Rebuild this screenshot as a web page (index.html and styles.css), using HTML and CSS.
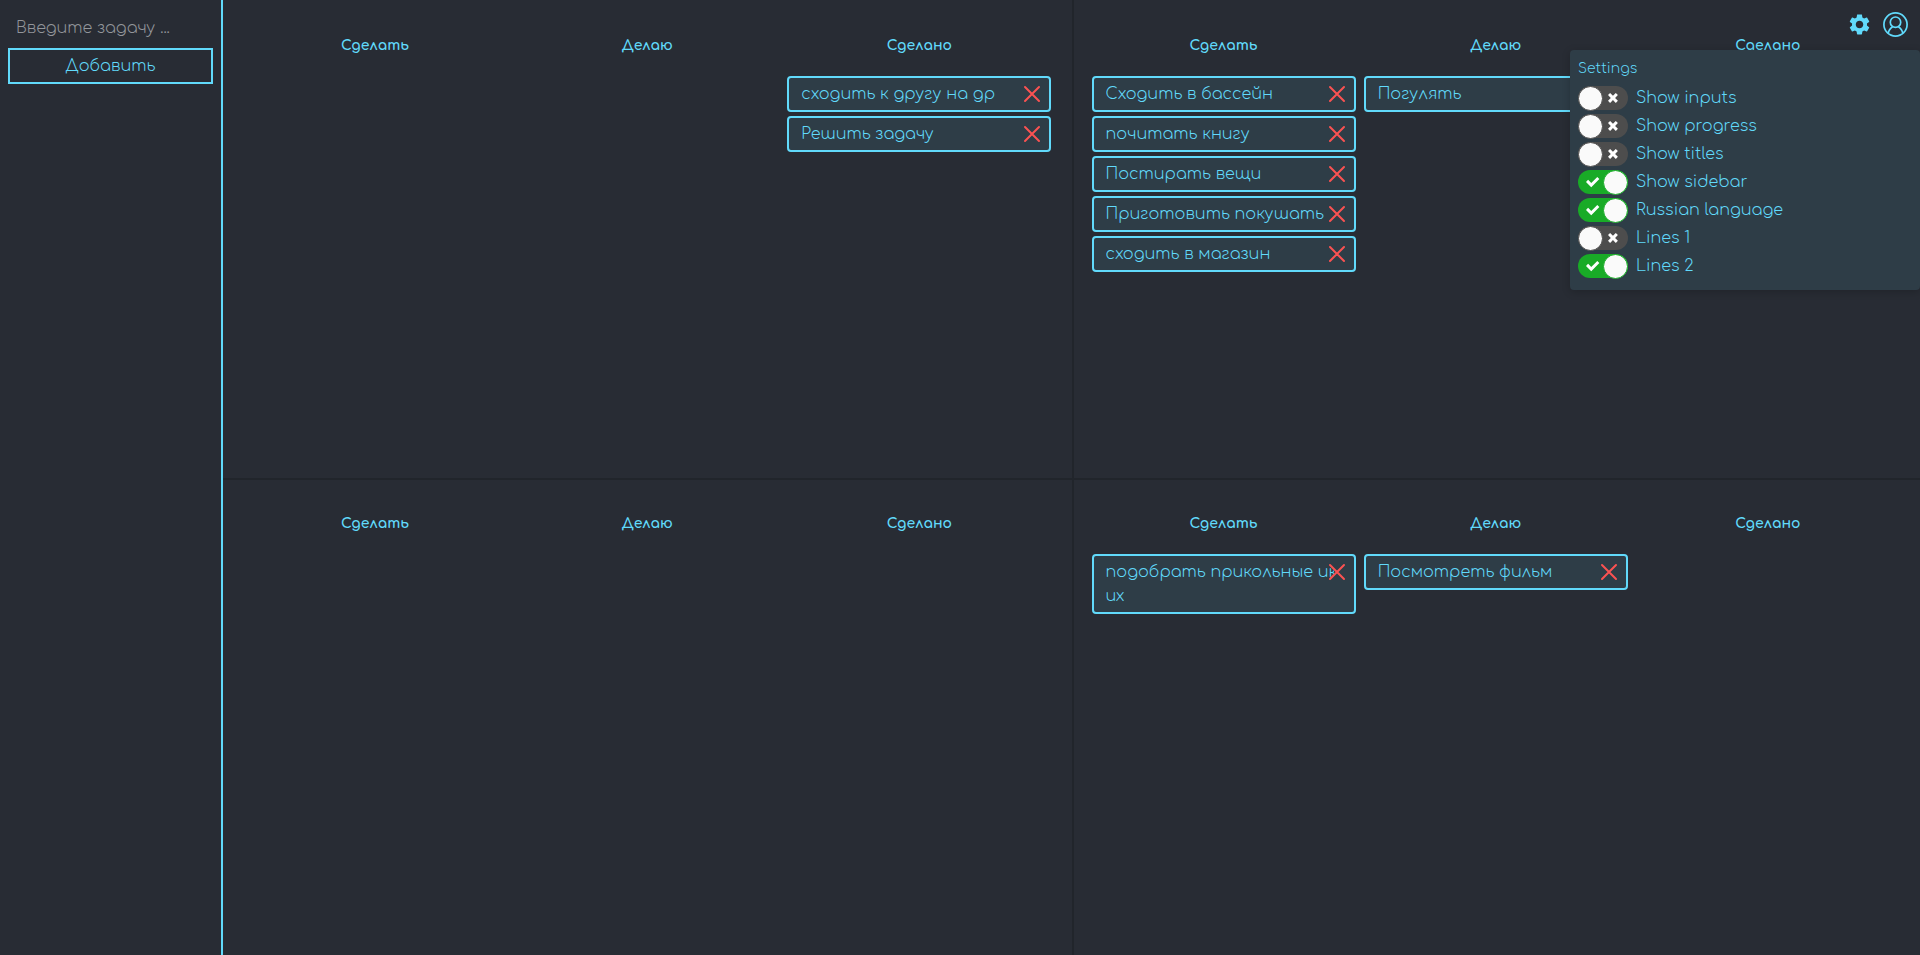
FILE: index.html
```html
<!DOCTYPE html>
<html lang="ru">
<head>
  <meta charset="UTF-8" />
  <meta name="viewport" content="width=device-width, initial-scale=1.0"/>
  <title>Todo Matrix</title>
  <link rel="stylesheet" href="styles.css">
</head>
<body>

  <svg class="sprite" aria-hidden="true">
    <symbol id="cross" viewBox="0 0 18 18">
      <path d="M2 2 L16 16 M16 2 L2 16" fill="none" stroke="currentColor" stroke-width="2" stroke-linecap="round"/>
    </symbol>
    <symbol id="check" viewBox="0 0 14 11">
      <path d="M11.264 0L5.26 6.004 2.103 2.847 0 4.95l5.26 5.26 8.108-8.107L11.264 0" fill="#fff"/>
    </symbol>
    <symbol id="off" viewBox="0 0 10 10">
      <path d="M9.9 2.12L7.78 0 4.95 2.828 2.12 0 0 2.12l2.83 2.83L0 7.776 2.123 9.9 4.95 7.07 7.78 9.9 9.9 7.776 7.072 4.95 9.9 2.12" fill="#fff"/>
    </symbol>
  </svg>

  <aside class="sidebar">
    <input class="task-input" type="text" aria-label="Новая задача" placeholder="Введите задачу ...">
    <button class="add-btn">Добавить</button>
  </aside>

  <main class="matrix">
    <section class="quadrant">
      <div class="column">
        <h4 class="title">Сделать</h4>
      </div>
      <div class="column">
        <h4 class="title">Делаю</h4>
      </div>
      <div class="column">
        <h4 class="title">Сделано</h4>
        <div class="task"><span class="text">сходить к другу на др</span><button class="delete" aria-label="Удалить"><svg><use href="#cross"/></svg></button></div>
        <div class="task"><span class="text">Решить задачу</span><button class="delete" aria-label="Удалить"><svg><use href="#cross"/></svg></button></div>
      </div>
    </section>

    <section class="quadrant">
      <div class="column">
        <h4 class="title">Сделать</h4>
        <div class="task"><span class="text">Сходить в бассейн</span><button class="delete" aria-label="Удалить"><svg><use href="#cross"/></svg></button></div>
        <div class="task"><span class="text">почитать книгу</span><button class="delete" aria-label="Удалить"><svg><use href="#cross"/></svg></button></div>
        <div class="task"><span class="text">Постирать вещи</span><button class="delete" aria-label="Удалить"><svg><use href="#cross"/></svg></button></div>
        <div class="task"><span class="text">Приготовить покушать</span><button class="delete" aria-label="Удалить"><svg><use href="#cross"/></svg></button></div>
        <div class="task"><span class="text">сходить в магазин</span><button class="delete" aria-label="Удалить"><svg><use href="#cross"/></svg></button></div>
      </div>
      <div class="column">
        <h4 class="title">Делаю</h4>
        <div class="task"><span class="text">Погулять</span><button class="delete" aria-label="Удалить"><svg><use href="#cross"/></svg></button></div>
      </div>
      <div class="column">
        <h4 class="title">Сделано</h4>
      </div>
    </section>

    <section class="quadrant">
      <div class="column">
        <h4 class="title">Сделать</h4>
      </div>
      <div class="column">
        <h4 class="title">Делаю</h4>
      </div>
      <div class="column">
        <h4 class="title">Сделано</h4>
      </div>
    </section>

    <section class="quadrant">
      <div class="column">
        <h4 class="title">Сделать</h4>
        <div class="task"><span class="text">подобрать прикольные ик<br>их</span><button class="delete" aria-label="Удалить"><svg><use href="#cross"/></svg></button></div>
      </div>
      <div class="column">
        <h4 class="title">Делаю</h4>
        <div class="task"><span class="text">Посмотреть фильм</span><button class="delete" aria-label="Удалить"><svg><use href="#cross"/></svg></button></div>
      </div>
      <div class="column">
        <h4 class="title">Сделано</h4>
      </div>
    </section>
  </main>

  <div class="toolbar">
    <button class="icon-btn" aria-label="Settings">
      <svg viewBox="0 0 24 24" fill="currentColor"><path d="M19.14 12.94c.04-.3.06-.61.06-.94 0-.32-.02-.64-.07-.94l2.03-1.58c.18-.14.23-.41.12-.61l-1.92-3.32c-.12-.22-.37-.29-.59-.22l-2.39.96c-.5-.38-1.03-.7-1.62-.94L14.4 2.81c-.04-.24-.24-.41-.48-.41h-3.84c-.24 0-.43.17-.47.41L9.25 5.35c-.59.24-1.13.57-1.62.94l-2.39-.96c-.22-.08-.47 0-.59.22L2.74 8.87c-.12.21-.08.47.12.61l2.03 1.58c-.05.3-.09.63-.09.94s.02.64.07.94l-2.03 1.58c-.18.14-.23.41-.12.61l1.92 3.32c.12.22.37.29.59.22l2.39-.96c.5.38 1.03.7 1.62.94l.36 2.54c.05.24.24.41.48.41h3.84c.24 0 .44-.17.47-.41l.36-2.54c.59-.24 1.13-.56 1.62-.94l2.39.96c.22.08.47 0 .59-.22l1.92-3.32c.12-.22.07-.47-.12-.61l-2.01-1.58zM12 15.6c-1.98 0-3.6-1.62-3.6-3.6s1.62-3.6 3.6-3.6 3.6 1.62 3.6 3.6-1.62 3.6-3.6 3.6z"/></svg>
    </button>
    <button class="icon-btn" aria-label="Profile">
      <svg viewBox="0 0 25 25" fill="none" stroke="currentColor" stroke-width="1.7">
        <circle cx="12.5" cy="12.5" r="11.6"/>
        <circle cx="12.5" cy="10.2" r="5.2"/>
        <path d="M5.2 21.5 C5.6 18.5 7.2 16.2 9.6 14.7 M15.4 14.7 C17.8 16.2 19.4 18.5 19.8 21.5"/>
      </svg>
    </button>
  </div>

  <div class="settings">
    <h5 class="settings-title">Settings</h5>
    <label class="option">
      <span class="toggle"><input type="checkbox"><svg class="on-icon"><use href="#check"/></svg><svg class="off-icon"><use href="#off"/></svg></span>
      Show inputs
    </label>
    <label class="option">
      <span class="toggle"><input type="checkbox"><svg class="on-icon"><use href="#check"/></svg><svg class="off-icon"><use href="#off"/></svg></span>
      Show progress
    </label>
    <label class="option">
      <span class="toggle"><input type="checkbox"><svg class="on-icon"><use href="#check"/></svg><svg class="off-icon"><use href="#off"/></svg></span>
      Show titles
    </label>
    <label class="option">
      <span class="toggle"><input type="checkbox" checked><svg class="on-icon"><use href="#check"/></svg><svg class="off-icon"><use href="#off"/></svg></span>
      Show sidebar
    </label>
    <label class="option">
      <span class="toggle"><input type="checkbox" checked><svg class="on-icon"><use href="#check"/></svg><svg class="off-icon"><use href="#off"/></svg></span>
      Russian language
    </label>
    <label class="option">
      <span class="toggle"><input type="checkbox"><svg class="on-icon"><use href="#check"/></svg><svg class="off-icon"><use href="#off"/></svg></span>
      Lines 1
    </label>
    <label class="option">
      <span class="toggle"><input type="checkbox" checked><svg class="on-icon"><use href="#check"/></svg><svg class="off-icon"><use href="#off"/></svg></span>
      Lines 2
    </label>
  </div>

</body>
</html>
```
FILE: styles.css
```css
* {
  box-sizing: border-box;
}

body {
  margin: 0;
  min-height: 100vh;
  display: flex;
  background-color: #282c34;
  color: #61dafb;
  font-family: Comfortaa, Lato, "Noto Sans", sans-serif;
  font-size: 16px;
  font-weight: 300;
  line-height: 24px;
}

input, button {
  font: inherit;
  color: inherit;
}

button {
  cursor: pointer;
}

.sprite {
  display: none;
}

.sidebar {
  width: 223px;
  flex-shrink: 0;
  padding: 8px;
  border-right: 2px solid #61dafb;
}

.task-input {
  display: block;
  width: 100%;
  height: 40px;
  padding: 0 8px;
  border: none;
  outline: none;
  background: none;
}

.task-input::placeholder {
  color: #93969b;
}

.add-btn {
  width: 100%;
  height: 36px;
  padding: 0;
  background: none;
  border: 2px solid #61dafb;
}

.matrix {
  flex: 1;
  display: grid;
  grid-template-columns: 1fr 1fr;
  grid-template-rows: 1fr 1fr;
}

.quadrant {
  display: grid;
  grid-template-columns: repeat(3, minmax(0, 1fr));
  gap: 8px;
  padding: 36px 20px 0;
}

.quadrant:nth-child(even) {
  padding-left: 18px;
  border-left: 2px solid #21252b;
}

.quadrant:nth-child(n+3) {
  padding-top: 34px;
  border-top: 2px solid #21252b;
}

.title {
  margin: 0 0 20px;
  font-size: 14px;
  line-height: 20px;
  text-align: center;
}

.task {
  position: relative;
  margin-bottom: 4px;
  padding: 4px 20px 4px 12px;
  background-color: #2e3d47;
  border: 2px solid #61dafb;
  border-radius: 4px;
  white-space: nowrap;
}

.text {
  display: block;
  overflow: hidden;
}

.delete {
  position: absolute;
  top: 7px;
  right: 8px;
  width: 18px;
  height: 18px;
  padding: 0;
  background: none;
  border: none;
  color: #fa5252;
}

.delete svg {
  display: block;
  width: 18px;
  height: 18px;
}

.toolbar {
  position: absolute;
  top: 12px;
  right: 12px;
  display: flex;
  gap: 11px;
}

.icon-btn {
  width: 25px;
  height: 25px;
  padding: 0;
  background: none;
  border: none;
}

.icon-btn svg {
  display: block;
  width: 100%;
  height: 100%;
}

.settings {
  position: absolute;
  top: 50px;
  right: 0;
  width: 350px;
  padding: 8px 8px 10px;
  background-color: #2e3d47;
  border-radius: 4px;
  box-shadow: 0 2px 8px rgba(0,0,0,0.2);
}

.settings-title {
  margin: 0 0 4px;
  font-size: 14px;
  font-weight: 300;
  line-height: 22px;
}

.option {
  display: flex;
  align-items: center;
  gap: 8px;
  height: 28px;
}

.toggle {
  position: relative;
  width: 50px;
  height: 24px;
}

.toggle input {
  appearance: none;
  display: flex;
  width: 50px;
  height: 24px;
  margin: 0;
  border-radius: 12px;
  background-color: #4d4d4d;
}

/* thumb */
.toggle input::before {
  content: "";
  width: 23px;
  height: 23px;
  border: 1px solid #4d4d4d;
  border-radius: 50%;
  background-color: #fafafa;
}

.toggle input:checked {
  justify-content: flex-end;
  background-color: #19ab27;
}

.toggle input:checked::before {
  border-color: #19ab27;
}

.on-icon, .off-icon {
  position: absolute;
  pointer-events: none;
}

.on-icon {
  display: none;
  top: 7px;
  left: 8px;
  width: 14px;
  height: 11px;
}

.off-icon {
  top: 7px;
  right: 10px;
  width: 10px;
  height: 10px;
}

.toggle input:checked ~ .on-icon {
  display: block;
}

.toggle input:checked ~ .off-icon {
  display: none;
}
```
